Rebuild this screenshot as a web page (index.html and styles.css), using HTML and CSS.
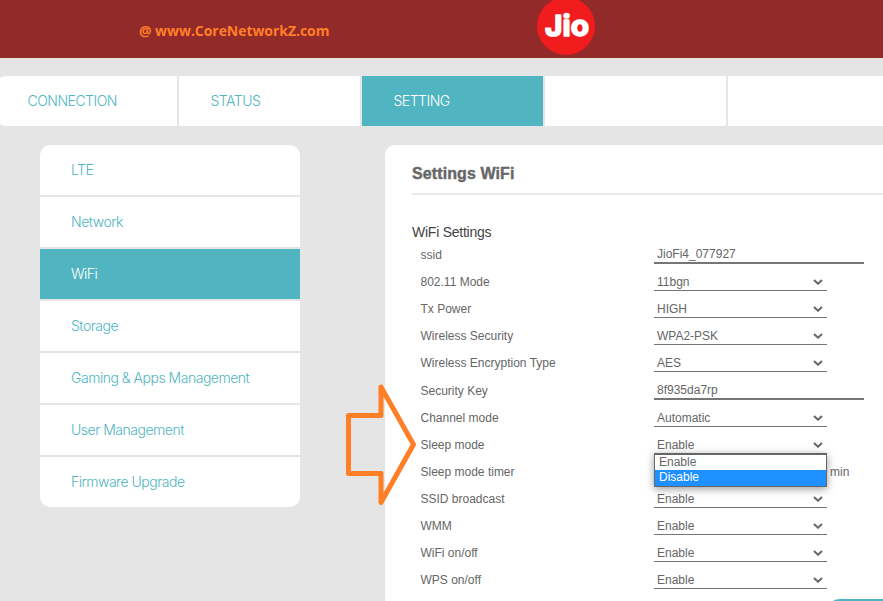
FILE: index.html
```html
<!DOCTYPE html>
<html lang="en">
<head>
  <meta charset="UTF-8" />
  <meta name="viewport" content="width=device-width, initial-scale=1.0" />
  <title>JioFi - Settings WiFi</title>
  <link rel="stylesheet" href="styles.css">
</head>
<body>
  <header class="header">
    <div class="site-name">@ www.CoreNetworkZ.com</div>
    <svg class="logo" width="58" height="58" viewBox="0 0 58 58">
      <circle cx="29" cy="29" r="29" fill="#f01c1e" />
      <text class="logo-text" x="8" y="39" textLength="44" lengthAdjust="spacingAndGlyphs">Jio</text>
    </svg>
  </header>

  <nav class="tabs">
    <a class="tab">CONNECTION</a>
    <a class="tab">STATUS</a>
    <a class="tab active">SETTING</a>
    <a class="tab"></a>
    <a class="tab"></a>
  </nav>

  <div class="content">
    <ul class="menu">
      <li>LTE</li>
      <li>Network</li>
      <li class="active">WiFi</li>
      <li>Storage</li>
      <li>Gaming &amp; Apps Management</li>
      <li>User Management</li>
      <li>Firmware Upgrade</li>
    </ul>

    <main class="panel">
      <h1>Settings WiFi</h1>
      <h2>WiFi Settings</h2>
      <form class="form">
        <div class="row row-input">
          <label>ssid</label>
          <input type="text" value="JioFi4_077927" />
        </div>
        <div class="row">
          <label>802.11 Mode</label>
          <div class="select"><select><option>11bgn</option></select><svg class="chevron" viewBox="0 0 10 6"><path d="M1 1l4 3.7L9 1" /></svg></div>
        </div>
        <div class="row">
          <label>Tx Power</label>
          <div class="select"><select><option>HIGH</option></select><svg class="chevron" viewBox="0 0 10 6"><path d="M1 1l4 3.7L9 1" /></svg></div>
        </div>
        <div class="row">
          <label>Wireless Security</label>
          <div class="select"><select><option>WPA2-PSK</option></select><svg class="chevron" viewBox="0 0 10 6"><path d="M1 1l4 3.7L9 1" /></svg></div>
        </div>
        <div class="row">
          <label>Wireless Encryption Type</label>
          <div class="select"><select><option>AES</option></select><svg class="chevron" viewBox="0 0 10 6"><path d="M1 1l4 3.7L9 1" /></svg></div>
        </div>
        <div class="row row-input">
          <label>Security Key</label>
          <input type="text" value="8f935da7rp" />
        </div>
        <div class="row">
          <label>Channel mode</label>
          <div class="select"><select><option>Automatic</option></select><svg class="chevron" viewBox="0 0 10 6"><path d="M1 1l4 3.7L9 1" /></svg></div>
        </div>
        <div class="row">
          <label>Sleep mode</label>
          <div class="select">
            <select><option>Enable</option></select><svg class="chevron" viewBox="0 0 10 6"><path d="M1 1l4 3.7L9 1" /></svg>
            <ul class="dropdown">
              <li>Enable</li>
              <li class="selected">Disable</li>
            </ul>
          </div>
        </div>
        <div class="row">
          <label>Sleep mode timer</label>
          <div class="select"></div>
          <span class="unit">min</span>
        </div>
        <div class="row">
          <label>SSID broadcast</label>
          <div class="select"><select><option>Enable</option></select><svg class="chevron" viewBox="0 0 10 6"><path d="M1 1l4 3.7L9 1" /></svg></div>
        </div>
        <div class="row">
          <label>WMM</label>
          <div class="select"><select><option>Enable</option></select><svg class="chevron" viewBox="0 0 10 6"><path d="M1 1l4 3.7L9 1" /></svg></div>
        </div>
        <div class="row">
          <label>WiFi on/off</label>
          <div class="select"><select><option>Enable</option></select><svg class="chevron" viewBox="0 0 10 6"><path d="M1 1l4 3.7L9 1" /></svg></div>
        </div>
        <div class="row">
          <label>WPS on/off</label>
          <div class="select"><select><option>Enable</option></select><svg class="chevron" viewBox="0 0 10 6"><path d="M1 1l4 3.7L9 1" /></svg></div>
        </div>
        <button type="button" class="apply"></button>
      </form>
    </main>
  </div>

  <!-- arrow pointing at the sleep mode row -->
  <svg class="arrow" width="74" height="126" viewBox="0 0 74 126">
    <path d="M5.5 34.5H38V6l32.5 57.5L38 121.5V92.5H5.5z" />
  </svg>
</body>
</html>
```
FILE: styles.css
```css
* {
  box-sizing: border-box;
}

body {
  margin: 0;
  height: 601px;
  overflow: hidden;
  position: relative;
  background: #e5e5e5;
  color: #666;
  font-family: "Liberation Sans", Arial, sans-serif;
  font-size: 12px;
}

ul {
  list-style: none;
  margin: 0;
  padding: 0;
}

.header {
  display: flex;
  height: 58px;
  padding-left: 139px;
  background: #932a2a;
  overflow: hidden;
}

.site-name {
  width: 398px;
  padding-top: 22px;
  color: #ff7f27;
  font: bold 14px/18px "Open Sans", sans-serif;
  letter-spacing: -0.05px;
}

.logo {
  margin-top: -3px;
}

.logo-text {
  font: bold 29px Inter, sans-serif;
  fill: #fff;
  stroke: #fff;
  stroke-width: 1.6px;
  stroke-linejoin: round;
}

.tabs {
  display: flex;
  gap: 2px;
  margin: 18px 0 0 -4px;
}

.tab {
  width: 181px;
  height: 50px;
  flex-shrink: 0;
  padding-left: 31.5px;
  background: #fff;
  color: #50b5c1;
  font: 300 14px/50px Inter, sans-serif;
  letter-spacing: -0.5px;
}

.tab:first-child {
  border-radius: 10px 0 0 10px;
}

.tab:last-child {
  flex: 1;
}

.tab.active,
.menu .active {
  background: #50b5c1;
  color: #fff;
}

.content {
  display: flex;
  gap: 85px;
  padding: 19px 0 0 40px;
}

.menu {
  display: flex;
  flex-direction: column;
  gap: 2px;
  width: 260px;
  height: 362px;
  flex-shrink: 0;
  border-radius: 10px;
  overflow: hidden;
}

.menu li {
  height: 50px;
  padding-left: 31px;
  background: #fff;
  color: #50b5c1;
  font: 300 14px/50px Inter, sans-serif;
  letter-spacing: -0.48px;
}

.panel {
  flex: 1;
  height: 456px;
  padding-left: 27px;
  background: #fff;
  border-radius: 10px 0 0 0;
  overflow: hidden;
}

h1 {
  margin: 0;
  height: 50px;
  padding-top: 19px;
  border-bottom: 2px solid #e9e9e9;
  font: bold 16px/20px "Liberation Sans", Arial, sans-serif;
  letter-spacing: 0.1px;
  -webkit-text-stroke: 0.4px #666;
}

h2 {
  margin: 0;
  height: 41px;
  padding-top: 29px;
  color: #444;
  font: 14px/17px "Liberation Sans", Arial, sans-serif;
  letter-spacing: -0.25px;
}

.form {
  padding-left: 8px;
}

.row {
  display: flex;
  height: 27px;
}

.row label {
  width: 234px;
  padding-top: 11px;
  padding-left: 0.5px;
  line-height: 14px;
}

.row input,
.row select {
  display: block;
  width: 100%;
  height: 100%;
  margin: 0;
  padding: 9px 3px 0;
  background: none;
  border: 0;
  border-bottom: 1px solid #767676;
  border-radius: 0;
  outline: none;
  appearance: none;
  color: #666;
  font: inherit;
}

.row-input {
  height: 28px;
}

.row-input label {
  padding-top: 12px;
}

.row input {
  width: 210px;
  border-bottom-width: 2px;
}

.select {
  position: relative;
  width: 173px;
}

.chevron {
  position: absolute;
  right: 4px;
  bottom: 6px;
  width: 10px;
  height: 6px;
  fill: none;
  stroke: #666;
  stroke-width: 2;
}

.dropdown {
  position: absolute;
  top: 26px;
  left: 0;
  z-index: 1;
  width: 173px;
  height: 34px;
  background: #fff;
  border: 1px solid #666;
  border-top-width: 2px;
  box-shadow: 0 2px 8px rgba(0, 0, 0, 0.4);
}

.dropdown li {
  height: 15px;
  padding-left: 4px;
  line-height: 14px;
}

.dropdown .selected {
  height: 16px;
  background: #1e90ff;
  color: #fff;
}

.unit {
  padding: 11px 0 0 3px;
  line-height: 14px;
}

.apply {
  display: block;
  width: 160px;
  height: 30px;
  margin: 10px 0 0 406px;
  background: #50b5c1;
  border: 0;
  border-radius: 14px;
}

.arrow {
  position: absolute;
  top: 381px;
  left: 343px;
  fill: none;
  stroke: #ff7f27;
  stroke-width: 5;
  stroke-linejoin: round;
}
```
